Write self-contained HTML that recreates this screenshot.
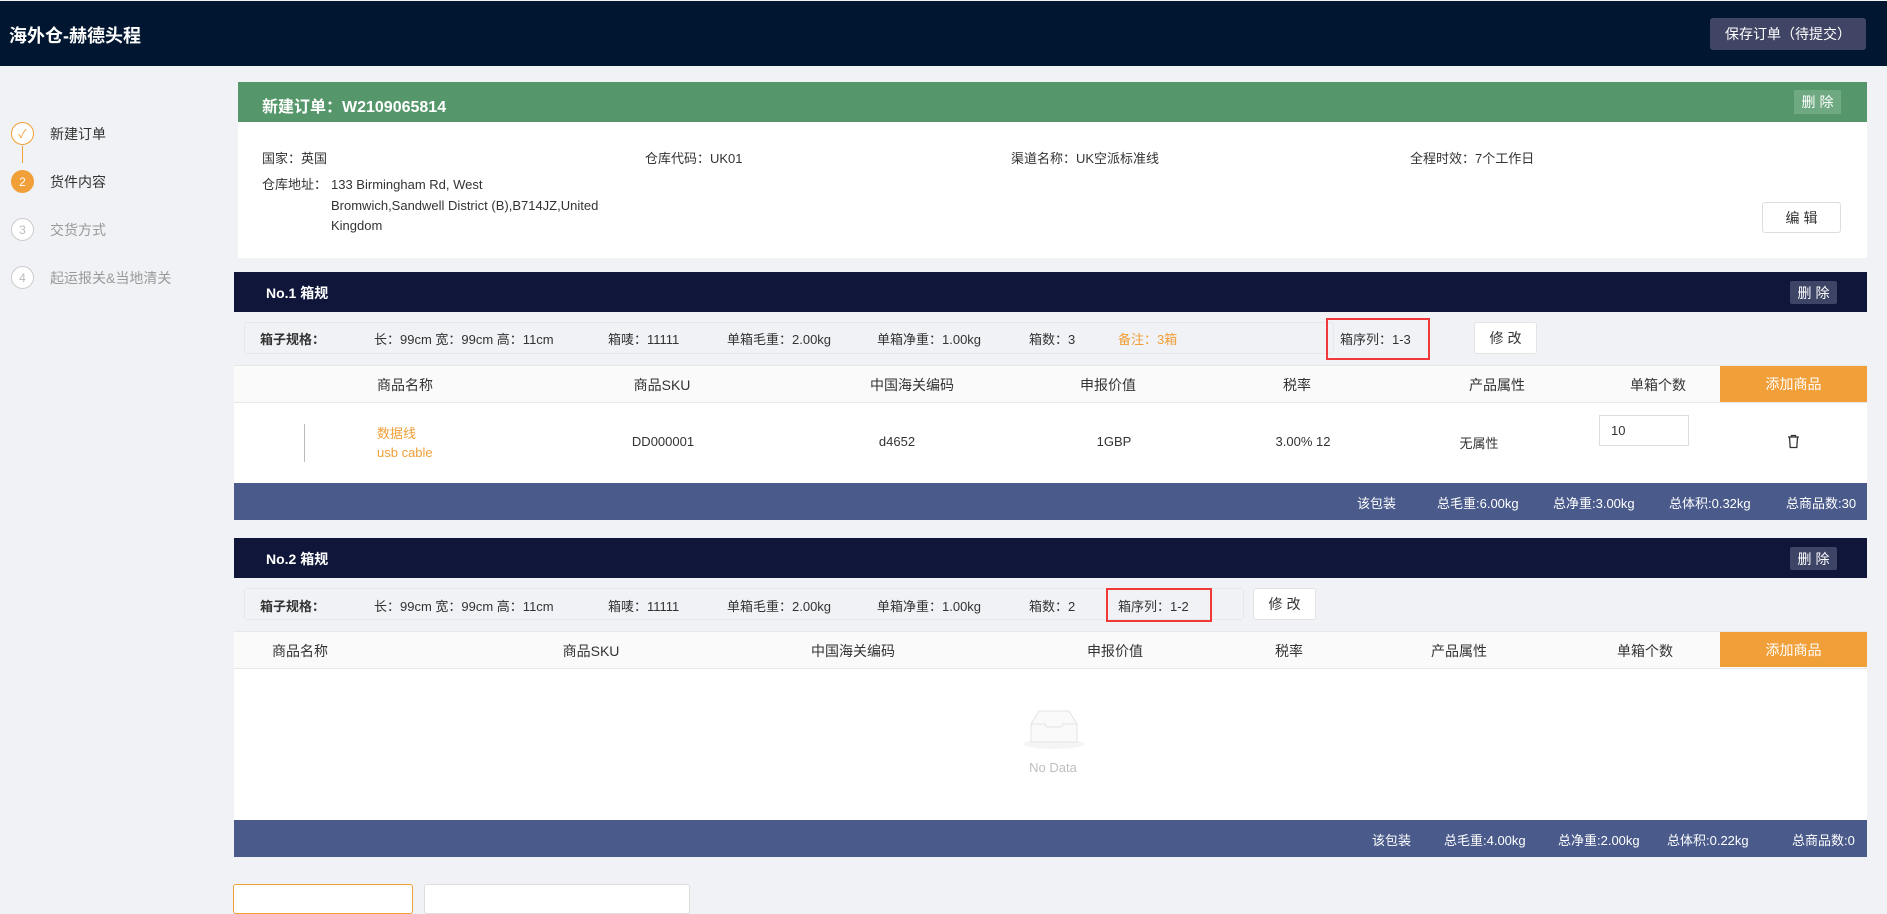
<!DOCTYPE html>
<html><head><meta charset="utf-8"><style>
*{margin:0;padding:0;box-sizing:border-box}
body{width:1887px;height:895px;overflow:hidden;background:#f0f2f5;font-family:"Liberation Sans","Noto Sans CJK SC",sans-serif;font-size:14px;color:#333;position:relative}
.a{position:absolute;white-space:nowrap}
.c{transform:translateX(-50%)}
.hdr{left:0;top:1px;width:1887px;height:65px;background:#011630}
.btn{position:absolute;display:flex;align-items:center;justify-content:center;white-space:nowrap}
.stepc{position:absolute;left:11px;width:23px;height:23px;border-radius:50%;border:1px solid #ccc;color:#bbb;font-size:12px;display:flex;align-items:center;justify-content:center;background:#fff}
.bh{background:#0f1639;color:#fff;font-weight:bold}
.del{background:#3d4466;color:#fff;font-size:14px;letter-spacing:4px;padding-left:4px}
.foot{background:#495a8b;color:#fff}
.red{position:absolute;border:2px solid #f03a3a}
.mod{background:#fff;border:1px solid #e3e3e3;border-radius:3px;letter-spacing:4px;padding-left:4px}
</style></head><body>
<div class="a hdr"></div>
<div class="a" style="left:9px;top:22px;color:#fff;font-size:18px;font-weight:bold">海外仓-赫德头程</div>
<div class="btn" style="left:1710px;top:18px;width:156px;height:32px;background:#414565;color:#fff;border-radius:3px;font-size:14px">保存订单（待提交）</div>

<div class="stepc" style="top:122px;border-color:#f19f38;color:#f19f38">✓</div>
<div class="a" style="left:22px;top:146px;width:1px;height:17px;background:#f19f38"></div>
<div class="stepc" style="top:170px;border-color:#f19f38;background:#f19f38;color:#fff">2</div>
<div class="stepc" style="top:218px">3</div>
<div class="stepc" style="top:266px">4</div>
<div class="a" style="left:50px;top:124px;color:#333">新建订单</div>
<div class="a" style="left:50px;top:172px;color:#333">货件内容</div>
<div class="a" style="left:50px;top:220px;color:#999">交货方式</div>
<div class="a" style="left:50px;top:268px;color:#999">起运报关&amp;当地清关</div>

<div class="a" style="left:238px;top:82px;width:1629px;height:40px;background:#55976a"></div>
<div class="a" style="left:262px;top:93px;color:#fff;font-size:16px;font-weight:bold">新建订单：W2109065814</div>
<div class="btn" style="left:1794px;top:90px;width:47px;height:24px;background:#6ea981;color:#fff;letter-spacing:4px;padding-left:4px">删除</div>
<div class="a" style="left:238px;top:122px;width:1629px;height:136px;background:#fff"></div>
<div class="a" style="left:262px;top:148px;font-size:13px">国家：英国</div>
<div class="a" style="left:645px;top:148px;font-size:13px">仓库代码：UK01</div>
<div class="a" style="left:1011px;top:148px;font-size:13px">渠道名称：UK空派标准线</div>
<div class="a" style="left:1410px;top:148px;font-size:13px">全程时效：7个工作日</div>
<div class="a" style="left:262px;top:175px;font-size:13px;line-height:20.5px">仓库地址：</div>
<div class="a" style="left:331px;top:175px;font-size:13px;line-height:20.5px">133 Birmingham Rd, West<br>Bromwich,Sandwell District (B),B714JZ,United<br>Kingdom</div>
<div class="btn" style="left:1762px;top:202px;width:79px;height:31px;border:1px solid #ddd;border-radius:3px;background:#fff;letter-spacing:4px;padding-left:4px">编辑</div>

<!-- Box 1 -->
<div class="a bh" style="left:234px;top:272px;width:1633px;height:40px"></div>
<div class="a" style="left:266px;top:283px;color:#fff;font-weight:bold">No.1 箱规</div>
<div class="btn del" style="left:1790px;top:281px;width:47px;height:23px;border-radius:2px">删除</div>
<div class="a" style="left:234px;top:312px;width:1633px;height:53px;background:#f0f2f5"></div>
<div class="a" style="left:244px;top:322px;width:1090px;height:32px;border:1px solid #e6e8ec;border-radius:3px"></div>
<div class="a" style="left:260px;top:329px;font-weight:bold;font-size:13px">箱子规格：</div>
<div class="a" style="left:374px;top:329px;font-size:13px">长：99cm 宽：99cm 高：11cm</div>
<div class="a" style="left:608px;top:329px;font-size:13px">箱唛：11111</div>
<div class="a" style="left:727px;top:329px;font-size:13px">单箱毛重：2.00kg</div>
<div class="a" style="left:877px;top:329px;font-size:13px">单箱净重：1.00kg</div>
<div class="a" style="left:1029px;top:329px;font-size:13px">箱数：3</div>
<div class="a" style="left:1118px;top:329px;font-size:13px;color:#f19f38">备注：3箱</div>
<div class="red" style="left:1326px;top:318px;width:104px;height:42px"></div>
<div class="a" style="left:1340px;top:329px;font-size:13px">箱序列：1-3</div>
<div class="btn mod" style="left:1474px;top:322px;width:63px;height:32px">修改</div>
<div class="a" style="left:234px;top:365px;width:1633px;height:38px;background:#fafafa;border-top:1px solid #e8e8e8;border-bottom:1px solid #e8e8e8"></div>
<div class="a c" style="left:405px;top:375px">商品名称</div>
<div class="a c" style="left:662px;top:375px">商品SKU</div>
<div class="a c" style="left:912px;top:375px">中国海关编码</div>
<div class="a c" style="left:1108px;top:375px">申报价值</div>
<div class="a c" style="left:1297px;top:375px">税率</div>
<div class="a c" style="left:1497px;top:375px">产品属性</div>
<div class="a c" style="left:1658px;top:375px">单箱个数</div>
<div class="btn" style="left:1720px;top:366px;width:147px;height:36px;background:#f19f38;color:#fff">添加商品</div>
<div class="a" style="left:234px;top:403px;width:1633px;height:80px;background:#fff"></div>
<div class="a" style="left:304px;top:424px;width:1px;height:38px;background:#bbb"></div>
<div class="a" style="left:377px;top:423px;color:#f19f38;font-size:13px">数据线</div>
<div class="a" style="left:377px;top:445px;color:#f19f38;font-size:13px">usb cable</div>
<div class="a c" style="left:663px;top:434px;font-size:13px">DD000001</div>
<div class="a c" style="left:897px;top:434px;font-size:13px">d4652</div>
<div class="a c" style="left:1114px;top:434px;font-size:13px">1GBP</div>
<div class="a c" style="left:1303px;top:434px;font-size:13px">3.00% 12</div>
<div class="a c" style="left:1479px;top:433px;font-size:13px">无属性</div>
<div class="a" style="left:1599px;top:415px;width:90px;height:31px;border:1px solid #ddd;background:#fff;padding:7px 11px;font-size:13px">10</div>
<svg class="a" style="left:1787px;top:434px" width="13" height="15" viewBox="0 0 13 15"><path d="M1 3h11M4.5 3V1.5h4V3M2.5 3l.7 10.5h6.6L10.5 3" fill="none" stroke="#333" stroke-width="1.3"/></svg>
<div class="a foot" style="left:234px;top:483px;width:1633px;height:37px"></div>
<div class="a" style="left:1357px;top:493px;color:#fff;font-size:13px">该包装</div>
<div class="a" style="left:1437px;top:493px;color:#fff;font-size:13px">总毛重:6.00kg</div>
<div class="a" style="left:1553px;top:493px;color:#fff;font-size:13px">总净重:3.00kg</div>
<div class="a" style="left:1669px;top:493px;color:#fff;font-size:13px">总体积:0.32kg</div>
<div class="a" style="left:1786px;top:493px;color:#fff;font-size:13px">总商品数:30</div>

<!-- Box 2 -->
<div class="a bh" style="left:234px;top:538px;width:1633px;height:40px"></div>
<div class="a" style="left:266px;top:549px;color:#fff;font-weight:bold">No.2 箱规</div>
<div class="btn del" style="left:1790px;top:547px;width:47px;height:23px;border-radius:2px">删除</div>
<div class="a" style="left:234px;top:578px;width:1633px;height:54px;background:#f0f2f5"></div>
<div class="a" style="left:244px;top:588px;width:1000px;height:32px;border:1px solid #e6e8ec;border-radius:3px"></div>
<div class="a" style="left:260px;top:596px;font-weight:bold;font-size:13px">箱子规格：</div>
<div class="a" style="left:374px;top:596px;font-size:13px">长：99cm 宽：99cm 高：11cm</div>
<div class="a" style="left:608px;top:596px;font-size:13px">箱唛：11111</div>
<div class="a" style="left:727px;top:596px;font-size:13px">单箱毛重：2.00kg</div>
<div class="a" style="left:877px;top:596px;font-size:13px">单箱净重：1.00kg</div>
<div class="a" style="left:1029px;top:596px;font-size:13px">箱数：2</div>
<div class="red" style="left:1106px;top:588px;width:106px;height:34px"></div>
<div class="a" style="left:1118px;top:596px;font-size:13px">箱序列：1-2</div>
<div class="btn mod" style="left:1253px;top:588px;width:63px;height:32px">修改</div>
<div class="a" style="left:234px;top:631px;width:1633px;height:38px;background:#fafafa;border-top:1px solid #e8e8e8;border-bottom:1px solid #e8e8e8"></div>
<div class="a c" style="left:300px;top:641px">商品名称</div>
<div class="a c" style="left:591px;top:641px">商品SKU</div>
<div class="a c" style="left:853px;top:641px">中国海关编码</div>
<div class="a c" style="left:1115px;top:641px">申报价值</div>
<div class="a c" style="left:1289px;top:641px">税率</div>
<div class="a c" style="left:1459px;top:641px">产品属性</div>
<div class="a c" style="left:1645px;top:641px">单箱个数</div>
<div class="btn" style="left:1720px;top:632px;width:147px;height:35px;background:#f19f38;color:#fff">添加商品</div>
<div class="a" style="left:234px;top:669px;width:1633px;height:151px;background:#fff"></div>
<svg class="a" style="left:1022px;top:708px" width="64" height="42" viewBox="0 0 64 42"><ellipse cx="32" cy="36" rx="31" ry="5" fill="#f5f5f5"/><path d="M9 16L17 3h30l8 13v18H9z" fill="#fafafa" stroke="#e4e4e4"/><path d="M9 16h14a3 3 0 0 0 3 3h12a3 3 0 0 0 3-3h14" fill="none" stroke="#e4e4e4"/></svg>
<div class="a c" style="left:1053px;top:760px;color:#bfbfbf;font-size:13px">No Data</div>
<div class="a foot" style="left:234px;top:820px;width:1633px;height:37px"></div>
<div class="a" style="left:1372px;top:830px;color:#fff;font-size:13px">该包装</div>
<div class="a" style="left:1444px;top:830px;color:#fff;font-size:13px">总毛重:4.00kg</div>
<div class="a" style="left:1558px;top:830px;color:#fff;font-size:13px">总净重:2.00kg</div>
<div class="a" style="left:1667px;top:830px;color:#fff;font-size:13px">总体积:0.22kg</div>
<div class="a" style="left:1792px;top:830px;color:#fff;font-size:13px">总商品数:0</div>

<div class="a" style="left:233px;top:884px;width:180px;height:30px;border:1px solid #f19f38;border-radius:3px;background:#fff"></div>
<div class="a" style="left:424px;top:884px;width:266px;height:30px;border:1px solid #ddd;border-radius:3px;background:#fff"></div>
</body></html>
